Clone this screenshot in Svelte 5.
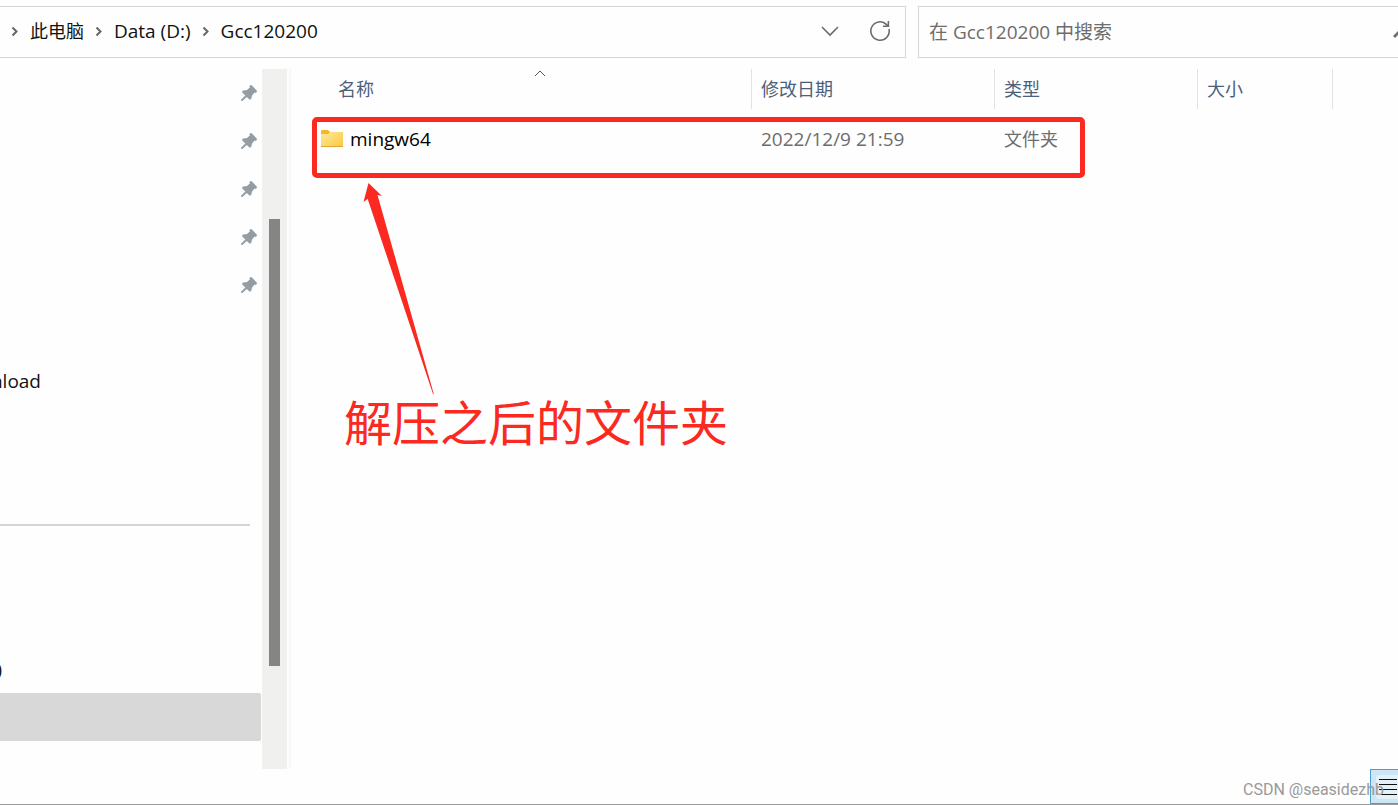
<script lang="ts">
	type NavItem = { label?: string; kind?: string; pinned?: boolean; selected?: boolean };

	const navItems: NavItem[] = [
		{ pinned: true },
		{ pinned: true },
		{ pinned: true },
		{ pinned: true },
		{ pinned: true },
		{},
		{ label: 'nload', kind: 'folder' },
		{},
		{},
		{ kind: 'divider' },
		{},
		{},
		{ label: ')', kind: 'drive' },
		{ selected: true }
	];

	const files = [{ name: 'mingw64', date: '2022/12/9 21:59', type: '文件夹' }];
	let search = $state('');
</script>

{#snippet crumbArrow()}
	<svg class="crumb-arrow" width="8" height="12" viewBox="0 0 8 12"><path d="M1.5 2.5 5.5 6.5 1.5 10.5" /></svg>
{/snippet}

<div class="window">
	<header class="toolbar">
		<nav class="address">
			<div class="crumbs">
				{@render crumbArrow()}
				<a class="cjk" href="#pc">此电脑</a>
				{@render crumbArrow()}
				<a href="#data">Data (D:)</a>
				{@render crumbArrow()}
				<a href="#gcc">Gcc120200</a>
			</div>
			<button class="tool" aria-label="history">
				<svg width="20" height="20" viewBox="0 0 20 20"><path d="M2 6 10 14 18 6" /></svg>
			</button>
			<button class="tool" aria-label="refresh">
				<svg width="22" height="22" viewBox="0 0 22 22">
					<path d="M20 9A9.2 9.2 0 1 1 17.6 4.6L19 6" />
					<path d="M19.4 1V6.2H14" />
				</svg>
			</button>
		</nav>
		<div class="search">
			<input type="text" aria-label="search" placeholder="在 Gcc120200 中搜索" bind:value={search} />
			<svg class="magnifier" width="5" height="20" viewBox="0 0 5 20"><path d="M1 15 8 8" /></svg>
		</div>
	</header>

	<main class="content">
		<aside class="sidebar">
			{#each navItems as item}
				<div class="nav-item" class:selected={item.selected}>
					{#if item.kind === 'divider'}
						<hr />
					{:else if item.label}
						<span class="nav-label {item.kind}">{item.label}</span>
					{/if}
					{#if item.pinned}
						<svg class="pin" width="18" height="18" viewBox="0 0 18 18">
							<path d="M9.6 1.4 11.4 1 17 6.8 16.4 8.8 14.4 8.8 12 11.6 11.2 15.2 9.4 15.6 6.8 13 2.4 17 1 16.8 1.2 15.6 5.4 11.4 2 8.2 2.8 6.6 7 6 9.8 3.4Z" />
						</svg>
					{/if}
				</div>
			{/each}
		</aside>
		<div class="scrollbar">
			<div class="thumb"></div>
		</div>

		<section class="files">
			<table>
				<colgroup>
					<col class="c-name" />
					<col class="c-date" />
					<col class="c-type" />
					<col class="c-size" />
				</colgroup>
				<thead>
					<tr>
						<th class="name">
							<button>名称</button>
							<svg class="sort" width="12" height="8" viewBox="0 0 12 8"><path d="M1 7 6 2 11 7" /></svg>
						</th>
						<th><button>修改日期</button></th>
						<th><button>类型</button></th>
						<th><button>大小</button></th>
					</tr>
				</thead>
				<tbody>
					{#each files as file}
						<tr>
							<td class="name">
								<div class="file">
									<svg width="22" height="18" viewBox="0 0 22 18">
										<defs>
											<linearGradient id="folder" x1="0" y1="0" x2="1" y2="1">
												<stop offset="0" stop-color="#fde9a0" />
												<stop offset="1" stop-color="#fbc93d" />
											</linearGradient>
										</defs>
										<path fill="#f6b726" d="M0 1Q0 0 1 0H7L9 2H22V6H0Z" />
										<path fill="url(#folder)" d="M0 4H7L9 2H22V17H0Z" />
										<path fill="#e2a533" d="M0 16H22V17H0Z" />
									</svg>
									<span>{file.name}</span>
								</div>
							</td>
							<td>{file.date}</td>
							<td class="cjk">{file.type}</td>
							<td></td>
						</tr>
					{/each}
				</tbody>
			</table>

			<!-- red notes drawn over the list -->
			<div class="mark"></div>
			<svg class="arrow" width="72" height="212" viewBox="0 0 72 212">
				<path d="M5.5 0 19 13 14.5 12 70.8 211H70L4.7 16 .5 19Z" />
			</svg>
			<p class="note">解压之后的文件夹</p>
		</section>
	</main>

	<footer class="status">
		<button class="view" aria-label="details">
			<svg width="22" height="24" viewBox="0 0 22 24">
				<rect width="24" height="24" rx="3" fill="#e5f1f8" />
				<path d="M3 4.5H21M3 9.5H21M3 14.5H21M3 19.5H21" />
			</svg>
		</button>
		<span class="watermark">CSDN @seasidezhb</span>
	</footer>
</div>

<style>
:global(body) {
	margin: 0;
	background: #fefefe;
}

.window {
	display: flex;
	flex-direction: column;
	min-height: 100vh;
	overflow: hidden;
	font-family: "Open Sans", "Noto Sans CJK SC", sans-serif;
	font-size: 19px;
	line-height: 24px;
	color: #111;
}

button {
	padding: 0;
	border: 0;
	background: none;
	font: inherit;
	color: inherit;
}

svg {
	display: block;
	flex: none;
}

.cjk {
	font-size: 18px;
}

.toolbar {
	display: grid;
	grid-template-columns: 906fr 480fr;
	gap: 12px;
	padding: 6px 0 11px;
}

.address,
.search {
	display: flex;
	align-items: center;
	box-sizing: border-box;
	height: 52px;
	border: 1px solid #d5d5d5;
}

.address {
	gap: 26px;
	padding: 0 13px 2px 0;
	border-left: 0;
}

.crumbs {
	display: flex;
	flex: 1;
	align-items: center;
	gap: 11px;
	padding-left: 11px;
}

.crumbs a {
	color: #111;
	text-decoration: none;
	white-space: nowrap;
}

.crumb-arrow path {
	fill: none;
	stroke: #666;
	stroke-width: 2;
}

.tool {
	display: grid;
	place-items: center;
	width: 24px;
	height: 24px;
}

.tool path {
	fill: none;
	stroke: #6b6b6b;
	stroke-width: 1.6;
}

.search {
	border-right: 0;
	padding-left: 10px;
}

.search input {
	flex: 1;
	min-width: 0;
	padding: 0;
	border: 0;
	outline: 0;
	background: none;
	font: inherit;
	color: #111;
}

.search input::placeholder {
	color: #6d6d6d;
	opacity: 1;
}

.magnifier path {
	stroke: #707070;
	stroke-width: 3;
}

.content {
	display: flex;
	flex: 1;
}

.sidebar {
	width: 262px;
	flex: none;
}

.nav-item {
	display: flex;
	align-items: center;
	height: 48px;
	margin-right: 1px;
}

.nav-item.selected {
	background: #d8d8d8;
	border-radius: 0 2px 2px 0;
}

.nav-item hr {
	flex: 1;
	height: 2px;
	margin: 0 11px 0 0;
	border: 0;
	background: #d5d5d5;
}

/* labels run out of the left edge of the window */
.nav-label {
	display: flex;
	justify-content: flex-end;
	overflow: hidden;
}

.folder {
	width: 41px;
}

.drive {
	width: 2px;
}

.pin {
	margin-left: auto;
	margin-right: 3px;
	fill: #959da4;
}

.scrollbar {
	display: flex;
	flex: none;
	flex-direction: column;
	align-items: center;
	box-sizing: border-box;
	width: 25px;
	padding: 150px 0 103px;
	background: #f0f0ee;
}

.thumb {
	flex: 1;
	width: 11px;
	background: #858585;
}

.files {
	position: relative;
	flex: 1;
	min-width: 0;
	margin-left: 2px;
	border-left: 2px solid #f7f7f7;
}

table {
	width: 1042px;
	table-layout: fixed;
	border-collapse: separate;
	border-spacing: 0;
}

.c-name {
	width: 461px;
}

.c-date {
	width: 243px;
}

.c-type {
	width: 203px;
}

.c-size {
	width: 135px;
}

th,
td {
	box-sizing: border-box;
	padding: 0 0 0 9px;
	text-align: left;
	vertical-align: middle;
}

th {
	position: relative;
	height: 40px;
	border-right: 1px solid #e2e2e2;
	font-size: 18px;
	font-weight: 400;
	color: #4c607a;
}

th button {
	display: block;
}

td {
	height: 60px;
	color: #6d6d6d;
}

th.name {
	padding-left: 47px;
}

td.name {
	padding-left: 30px;
	color: #000;
}

.sort {
	position: absolute;
	top: 0;
	left: 243px;
}

.sort path {
	fill: none;
	stroke: #555;
}

.file {
	display: flex;
	align-items: center;
	gap: 7px;
}

.mark {
	position: absolute;
	top: 48px;
	left: 21px;
	box-sizing: border-box;
	width: 773px;
	height: 61px;
	border: 5px solid #fb291f;
	border-radius: 5px;
}

.arrow {
	position: absolute;
	top: 114px;
	left: 72px;
	fill: #fb291f;
}

.note {
	position: absolute;
	top: 321px;
	left: 53px;
	margin: 0;
	font-family: "Noto Sans CJK SC", sans-serif;
	font-size: 48px;
	line-height: 60px;
	white-space: nowrap;
	color: #fb291f;
}

.status {
	position: relative;
	display: flex;
	justify-content: flex-end;
	box-sizing: border-box;
	height: 36px;
	border-bottom: 1px solid #999;
}

.view {
	display: flex;
	align-items: center;
	justify-content: flex-end;
	box-sizing: border-box;
	width: 28px;
	border: 1px solid #4a9fd8;
	border-right: 0;
	background: #cbe6f5;
}

.view path {
	stroke: #111;
}

.watermark {
	position: absolute;
	top: 9px;
	right: 14px;
	font-family: Roboto, sans-serif;
	font-size: 16px;
	color: #999;
}
</style>
